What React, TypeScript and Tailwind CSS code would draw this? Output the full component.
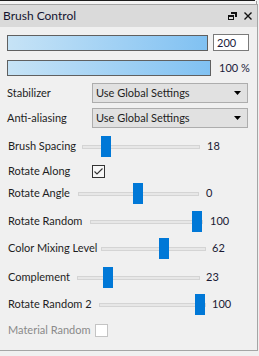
import React from 'react'

const sliders = [
  { label: 'Brush Spacing', start: 82, track: 'w-[118px]', width: 118, frac: 0.18, value: '18', gap: 'ml-[7px]' },
  { label: 'Rotate Angle', start: 78, track: 'w-[121px]', width: 121, frac: 0.5, value: '0', gap: 'ml-[7px]' },
]

const sliders2 = [
  { label: 'Rotate Random', start: 90, track: 'w-[113px]', width: 113, frac: 1, value: '100', gap: 'ml-[7px]', mt: 'mt-[7px]' },
  { label: 'Color Mixing Level', start: 101, track: 'w-[105px]', width: 105, frac: 0.62, value: '62', gap: 'ml-[6px]', mt: 'mt-[6px]' },
  { label: 'Complement', start: 77, track: 'w-[123px]', width: 123, frac: 0.23, value: '23', gap: 'ml-[6px]', mt: 'mt-[8px]' },
  { label: 'Rotate Random 2', start: 99, track: 'w-[107px]', width: 107, frac: 1, value: '100', gap: 'ml-[6px]', mt: 'mt-[6px]' },
]

const SliderRow = (props: { label: string, start: number, track: string, width: number, frac: number, value: string, gap: string, className?: string }) => {
  const { label, start, track, width, frac, value, gap, className } = props
  const left = Math.round(frac * (width - 11))
  return (
    <div className={`flex items-center h-[21px] pl-[8px] ${className ?? ''}`}>
      <span className="shrink-0 whitespace-nowrap" style={{ width: start - 8 }}>{label}</span>
      <div className={`relative h-[21px] shrink-0 ${track}`}>
        <div className="absolute left-0 right-0 top-[9px] h-[4px] bg-[#e7e7e7] border border-[#d4d4d4]" />
        <div className="absolute top-0 h-[21px] w-[10px] bg-[#0078d7]" style={{ left }} />
      </div>
      <span className={`${gap} text-[#1a1a33]`}>{value}</span>
    </div>
  )
}

const Dropdown = (props: { label: string, className?: string }) => (
  <div className={`flex items-center h-[20px] pl-[7px] ${props.className ?? ''}`}>
    <span className="w-[85px]">{props.label}</span>
    <div className="flex items-center justify-between w-[156px] h-[20px] bg-[#e1e1e1] border border-[#adadad] pl-[3px] pr-[6px]">
      <span>Use Global Settings</span>
      <svg width="7" height="4" viewBox="0 0 7 4"><path d="M0 0h7L3.5 4z" fill="#000" /></svg>
    </div>
  </div>
)

export default function App() {
  return (
    <div className="w-[259px] h-[356px] bg-[#f0f0f0] overflow-hidden text-[11px] text-[#1e1e1e]" style={{ fontFamily: 'Lato, "Noto Sans", sans-serif' }}>
      <div className="h-[1px] w-[255px] bg-[#1c1c1c]" />
      <div className="h-[3px] w-[257px] border-r border-[#9c9c9c] bg-[#f4f4f4]" />
      <div className="w-[258px] h-[347px] border-r border-b border-t border-[#a5a5a5] flex flex-col">
        {/* title bar */}
        <div className="flex items-center justify-between h-[22px] bg-[#dadada] pl-[3px] pr-[5px] text-[12px] text-[#141430]">
          <span>Brush Control</span>
          <div className="flex items-center gap-[7px]">
            <svg width="9" height="8" viewBox="0 0 9 8">
              <path d="M3 0h6v5H7V2H3z" fill="#111" />
              <path d="M0 3h6v5H0z M1 5v2h4V5z" fill="#111" fillRule="evenodd" />
            </svg>
            <svg width="8" height="8" viewBox="0 0 8 8">
              <path d="M0.5 0.5L7.5 7.5M7.5 0.5L0.5 7.5" stroke="#111" strokeWidth="1.4" />
            </svg>
          </div>
        </div>

        {/* size bar */}
        <div className="flex items-center h-[17px] mt-[7px] pl-[7px]">
          <div className="w-[201px] h-[16px] border border-[#606060] bg-gradient-to-r from-[#c6e3f6] to-[#80c1f2]" />
          <div className="ml-[5px] w-[36px] h-[17px] bg-white border border-[#7a7a7a] pl-[3px] leading-[15px] text-[#1a1a3a]">200</div>
        </div>

        {/* opacity bar */}
        <div className="flex items-center h-[16px] mt-[9px] pl-[7px]">
          <div className="w-[204px] h-[16px] border border-[#606060] bg-gradient-to-r from-[#c6e3f6] to-[#80c1f2]" />
          <span className="ml-[8px] text-[#1a1a3a]">100 %</span>
        </div>

        <Dropdown label="Stabilizer" className="mt-[7px]" />
        <Dropdown label="Anti-aliasing" className="mt-[5px]" />

        <SliderRow {...sliders[0]} className="mt-[8px]" />

        <div className="flex items-center h-[18px] mt-[5px] pl-[8px]">
          <span className="w-[84px] shrink-0">Rotate Along</span>
          <div className="w-[13px] h-[13px] border border-[#333] bg-[#f7f7f7] flex items-center justify-center">
            <svg width="9" height="7" viewBox="0 0 9 7"><path d="M0.5 3.5L3 6L8.5 0.5" stroke="#333" strokeWidth="1.1" fill="none" /></svg>
          </div>
        </div>

        <SliderRow {...sliders[1]} className="mt-[3px]" />

        {sliders2.map((s) => (
          <SliderRow key={s.label} {...s} className={s.mt} />
        ))}

        <div className="flex items-center h-[18px] mt-[6px] pl-[8px]">
          <span className="w-[87px] shrink-0 whitespace-nowrap text-[#8a8a8a]">Material Random</span>
          <div className="w-[13px] h-[13px] border border-[#c4c4c4] bg-white" />
        </div>
      </div>
    </div>
  )
}
